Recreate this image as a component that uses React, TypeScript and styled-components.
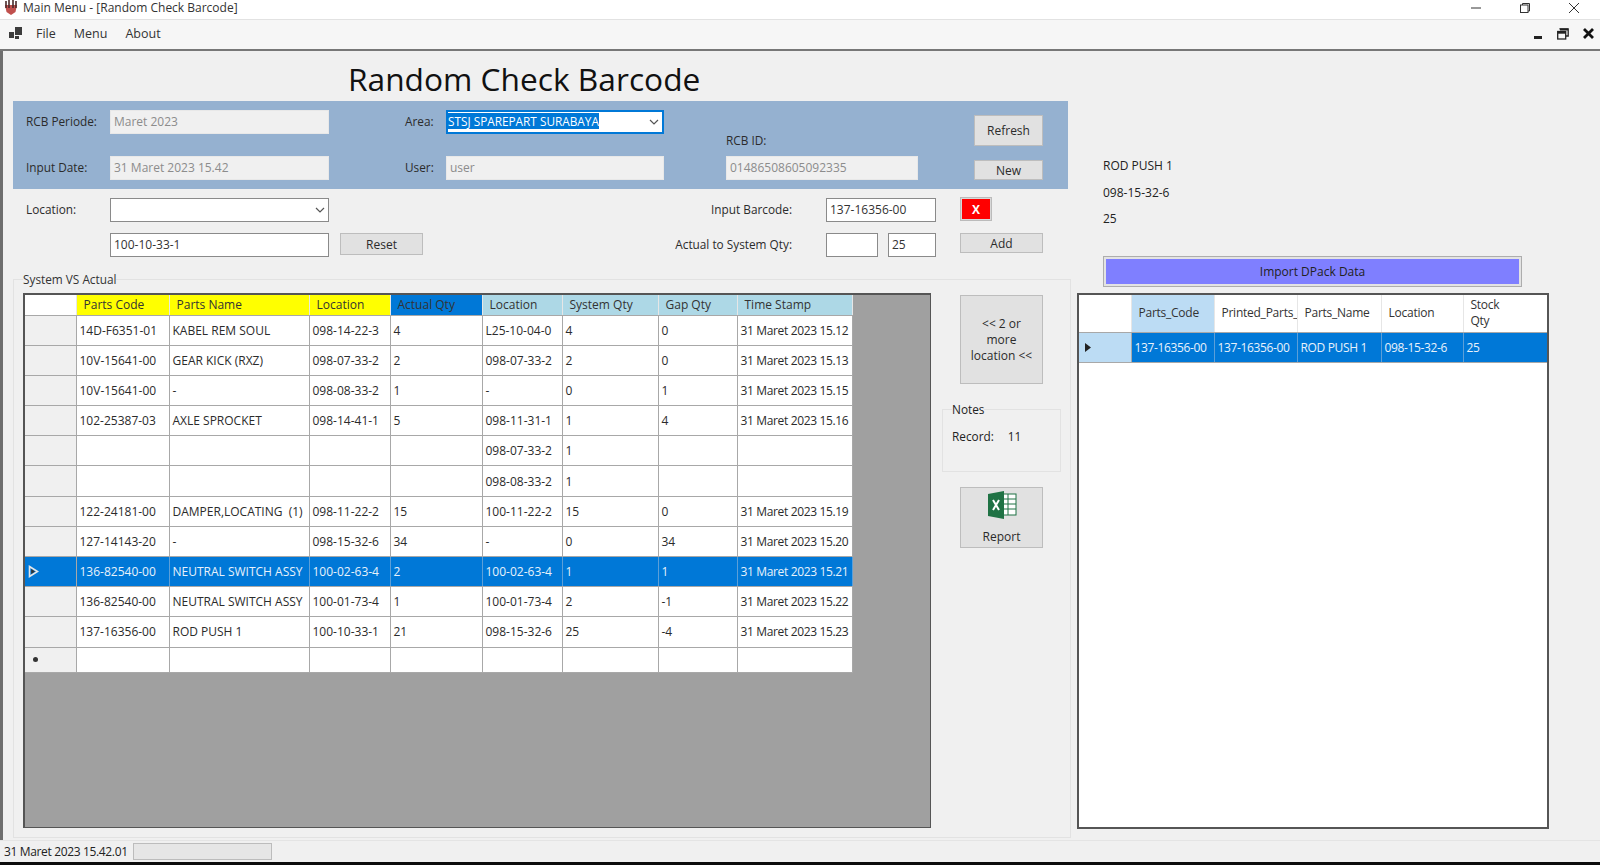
import React from 'react';
import styled, { createGlobalStyle } from 'styled-components';

const GlobalStyle = createGlobalStyle`
  html, body { margin: 0; padding: 0; background: #000; }
  * { box-sizing: border-box; }
  body { font-family: "Open Sans", "Noto Sans", "Liberation Sans", sans-serif; font-size: 12px; color: #222; }
`;

const Window = styled.div`
  width: 1600px;
  height: 865px;
  display: flex;
  flex-direction: column;
  background: #f0f0f0;
  overflow: hidden;
`;

const TitleBar = styled.div`
  height: 19px;
  flex: none;
  background: #fff;
  display: flex;
  align-items: center;
  padding: 0 0 4px 3px;
  gap: 4px;
  font-size: 12px;
  color: #333;
`;

const TitleText = styled.span`
  flex: 1;
`;

const TitleControls = styled.div`
  display: flex;
  align-items: center;
  gap: 39px;
  padding-right: 21px;
`;

const MenuBar = styled.div`
  height: 32px;
  flex: none;
  background: #f6f6f6;
  border-top: 1px solid #e2e2e2;
  border-bottom: 2px solid #777;
  display: flex;
  align-items: center;
  padding: 0 0 2px 9px;
  font-size: 12.5px;
  color: #333;
`;

const MenuItem = styled.span<{ $gap: number }>`
  margin-left: ${p => p.$gap}px;
`;

const MdiControls = styled.div`
  margin-left: auto;
  display: flex;
  align-items: center;
  gap: 14px;
  padding-right: 6px;
`;

const Content = styled.div`
  flex: 1;
  min-height: 0;
  display: flex;
  gap: 6px;
  border-left: 3px solid #6e6e6e;
  padding: 0 0 2px 10px;
`;

const LeftColumn = styled.div`
  width: 1058px;
  flex: none;
  display: flex;
  flex-direction: column;
`;

const Heading = styled.h1`
  margin: 0;
  height: 50px;
  padding-left: 335px;
  font-size: 31.7px;
  line-height: 56px;
  font-weight: 400;
  color: #111;
`;

const BluePanel = styled.div`
  width: 1055px;
  height: 88px;
  flex: none;
  background: #95b1d0;
  display: grid;
  grid-template-columns: 84px 219px 76px 41px 218px 62px 192px 56px 69px;
  grid-template-rows: 24px 24px;
  row-gap: 22px;
  padding: 9px 0 0 13px;
`;

const Label = styled.label<{ $right?: boolean; $col?: number; $row?: number }>`
  display: flex;
  align-items: center;
  font-size: 11.8px;
  padding-bottom: 2px;
  color: #2b2b2b;
  white-space: nowrap;
  justify-content: ${p => (p.$right ? 'flex-end' : 'flex-start')};
  grid-column: ${p => p.$col ?? 'auto'};
  grid-row: ${p => p.$row ?? 'auto'};
`;

const IdLabel = styled(Label)`
  align-items: flex-end;
  margin-bottom: -16px;
`;

const Field = styled.input<{ $muted?: boolean; $plain?: boolean; $col?: number; $row?: number }>`
  width: 100%;
  height: 24px;
  min-width: 0;
  padding: 0 3px 2px;
  font: inherit;
  font-size: 12px;
  outline: none;
  color: ${p => (p.$muted ? '#8c8c8c' : '#333')};
  background: ${p => (p.$muted ? '#f0f0f0' : '#fff')};
  border: ${p => (p.$plain ? '1px solid #e8e8e8' : '1px solid #8a8a8a')};
  grid-column: ${p => p.$col ?? 'auto'};
  grid-row: ${p => p.$row ?? 'auto'};
`;

const Combo = styled.div<{ $focused?: boolean; $col: number; $row: number }>`
  height: 24px;
  background: #fff;
  border: ${p => (p.$focused ? '2px solid #0078d7' : '1px solid #8a8a8a')};
  display: flex;
  align-items: center;
  justify-content: ${p => (p.$focused ? 'space-between' : 'flex-end')};
  padding: 0 3px 0 0;
  grid-column: ${p => p.$col};
  grid-row: ${p => p.$row};
`;

const Selected = styled.span`
  background: #0078d7;
  color: #fff;
  font-size: 11.8px;
  line-height: 16px;
  margin-bottom: 2px;
  white-space: nowrap;
`;

const Chevron = () => (
  <svg width="10" height="6" viewBox="0 0 10 6" fill="none" stroke="#555" strokeWidth="1.2">
    <path d="M1 1l4 4 4-4" />
  </svg>
);

const ButtonStack = styled.div`
  grid-column: 9;
  grid-row: 1 / span 2;
  display: flex;
  flex-direction: column;
  gap: 14px;
  padding-top: 5px;
`;

const Button = styled.button<{ $h: number; $col?: number; $row?: number }>`
  height: ${p => p.$h}px;
  width: 100%;
  flex: none;
  padding: 0;
  background: #e1e1e1;
  border: 1px solid #bdbdbd;
  font: inherit;
  font-size: 12px;
  color: #2b2b2b;
  grid-column: ${p => p.$col ?? 'auto'};
  grid-row: ${p => p.$row ?? 'auto'};
`;

const FormGrid = styled.div`
  margin-top: 9px;
  display: grid;
  grid-template-columns: 84px 219px 11px 83px 369px 34px 110px 24px 83px;
  grid-template-rows: 24px 24px;
  row-gap: 11px;
  padding-left: 13px;
  flex: none;
`;

const QtyPair = styled.div`
  grid-column: 7;
  grid-row: 2;
  display: flex;
  gap: 10px;
`;

const QtyField = styled(Field)<{ $w: number }>`
  width: ${p => p.$w}px;
`;

const CloseBtn = styled.button`
  grid-column: 9;
  grid-row: 1;
  width: 30px;
  height: 22px;
  margin-left: 1px;
  padding: 0;
  background: #ff0000;
  border: 1px solid #d8d8d8;
  box-shadow: 0 0 0 1px #bbb;
  color: #fff;
  font: inherit;
  font-size: 12px;
  font-weight: 700;
`;

const Group = styled.fieldset`
  margin: 14px 0 0;
  padding: 5px 9px 9px;
  flex: 1;
  min-height: 0;
  display: flex;
  border: 1px solid #e2e2e2;
  min-width: 0;
`;

const Legend = styled.legend`
  padding: 0;
  margin-left: 0;
  font-size: 11.8px;
  line-height: 17px;
  color: #333;
`;

const GridBox = styled.div<{ $w: number }>`
  width: ${p => p.$w}px;
  flex: none;
  background: #a0a0a0;
  border: 2px solid #555;
  border-right-width: 1px;
  border-bottom-width: 1px;
  overflow: hidden;
`;

const Table = styled.table<{ $w: number }>`
  width: ${p => p.$w}px;
  table-layout: fixed;
  border-collapse: collapse;
  font-size: 12px;
`;

const Head = styled.th<{ $bg: string; $h: number; $tight?: boolean }>`
  height: ${p => p.$h}px;
  background: ${p => p.$bg};
  border-right: 1px solid #e6e6e6;
  border-bottom: 1px solid #a8a8a8;
  padding: 0 0 0 7px;
  font-weight: 400;
  text-align: left;
  color: #333;
  line-height: 16px;
  white-space: pre-line;
  overflow: hidden;
  letter-spacing: ${p => (p.$tight ? '-0.25px' : '0')};
`;

const Cell = styled.td<{ $sel?: boolean; $h: number; $tight?: boolean }>`
  height: ${p => p.$h}px;
  background: ${p => (p.$sel ? '#0078d7' : '#fff')};
  color: ${p => (p.$sel ? '#e8f2fb' : '#2b2b2b')};
  border-right: 1px solid ${p => (p.$sel ? '#5c9fd8' : '#a8a8a8')};
  border-bottom: 1px solid #a8a8a8;
  padding: 0 0 0 3px;
  white-space: pre;
  overflow: hidden;
  letter-spacing: ${p => (p.$tight ? '-0.35px' : '0')};
`;

const RowHeader = styled.td<{ $bg: string; $h: number }>`
  height: ${p => p.$h}px;
  background: ${p => p.$bg};
  border-right: 1px solid #a8a8a8;
  border-bottom: 1px solid #a8a8a8;
  padding: 0 0 0 3px;
`;

const SideColumn = styled.div`
  width: 119px;
  margin-left: 11px;
  flex: none;
  display: flex;
  flex-direction: column;
`;

const SideButton = styled(Button)`
  margin: 2px 0 0 18px;
  width: 83px;
  line-height: 16px;
  display: flex;
  flex-direction: column;
  align-items: center;
  justify-content: center;
`;

const ReportButton = styled(SideButton)`
  margin-top: 15px;
  gap: 9px;
`;

const Notes = styled.fieldset`
  margin: 17px 0 0;
  padding: 0 0 0 9px;
  height: 71px;
  flex: none;
  border: 1px solid #e2e2e2;
  min-width: 0;
`;

const NotesLegend = styled.legend`
  padding: 0;
  margin-left: 0;
  font-size: 11.8px;
  line-height: 17px;
`;

const RecordLine = styled.div`
  display: flex;
  gap: 14px;
  margin-top: 10px;
  font-size: 11.8px;
`;

const RightColumn = styled.div`
  width: 472px;
  flex: none;
  display: flex;
  flex-direction: column;
`;

const Info = styled.div`
  margin: 102px 0 0 26px;
  line-height: 26.5px;
  font-size: 12px;
  height: 79px;
`;

const ImportButton = styled.button`
  margin: 24px 0 0 26px;
  width: 419px;
  height: 31px;
  flex: none;
  padding: 0;
  background: #7f7fff;
  border: 1px solid #adadad;
  box-shadow: inset 0 0 0 2px #e3e3e3;
  font: inherit;
  font-size: 12px;
  color: #222;
`;

const RightGrid = styled(GridBox)`
  margin-top: 6px;
  height: 536px;
  background: #fff;
  border-right-width: 2px;
  border-bottom-width: 2px;
`;

const StatusBar = styled.div`
  height: 22px;
  flex: none;
  background: #f0f0f0;
  border-top: 1px solid #e4e4e4;
  display: flex;
  align-items: center;
  gap: 5px;
  padding-left: 4px;
  font-size: 12px;
  letter-spacing: -0.35px;
`;

const Progress = styled.div`
  width: 139px;
  height: 17px;
  background: #e6e6e6;
  border: 1px solid #bcbcbc;
`;

const BottomEdge = styled.div`
  height: 3px;
  flex: none;
  background: #0c0c0c;
`;

const AppIcon = () => (
  <svg width="16" height="15" viewBox="0 0 16 15">
    <path d="M2 5h12l-1.5 7L8 15l-4.5-3z" fill="#c0504d" />
    <path d="M3 1v7M6 0v8M10 0v8M13 1v7" stroke="#4a2a2a" strokeWidth="1.6" />
  </svg>
);

const MdiIcon = () => (
  <svg width="14" height="13" viewBox="0 0 14 13" fill="#3c3c3c">
    <rect x="0" y="5" width="5" height="6" />
    <rect x="6" y="0" width="7" height="8" />
    <rect x="6" y="9" width="4" height="3" />
  </svg>
);

const WinMin = () => (
  <svg width="10" height="10" viewBox="0 0 10 10" stroke="#333" fill="none"><path d="M0 5h10" /></svg>
);
const WinRestore = () => (
  <svg width="10" height="10" viewBox="0 0 10 10" stroke="#333" fill="none">
    <rect x="0.5" y="2" width="7.5" height="7.5" />
    <path d="M2.5 2V.5h7V8H8" />
  </svg>
);
const WinClose = () => (
  <svg width="10" height="10" viewBox="0 0 10 10" stroke="#333" fill="none"><path d="M0 0l10 10M10 0L0 10" /></svg>
);

const MdiMin = () => (
  <svg width="9" height="12" viewBox="0 0 9 12" fill="#222"><rect x="0" y="8" width="8" height="3" /></svg>
);
const MdiRestore = () => (
  <svg width="12" height="12" viewBox="0 0 12 12" fill="none" stroke="#222" strokeWidth="1.3">
    <rect x="0.7" y="3.5" width="8" height="7.5" />
    <path d="M0.7 4.5h8" strokeWidth="2.4" />
    <path d="M3 1.5V.8h8.2V8H9" />
    <path d="M3 1.5h8" strokeWidth="2" />
  </svg>
);
const MdiClose = () => (
  <svg width="11" height="11" viewBox="0 0 11 11" stroke="#111" strokeWidth="2.8" fill="none"><path d="M1 1l9 9M10 1l-9 9" /></svg>
);

const ExcelIcon = () => (
  <svg width="30" height="30" viewBox="0 0 30 30">
    <rect x="14" y="4" width="15" height="21" fill="#fff" stroke="#1f7244" />
    <path d="M14 9h15M14 14h15M14 19h15M21 4v21" stroke="#1f7244" />
    <path d="M1 4l16-3v28L1 26z" fill="#1f7244" />
    <path d="M6 10l6 10M12 10l-6 10" stroke="#fff" strokeWidth="2" />
  </svg>
);

const MarkerSvg = styled.svg<{ $left: number }>`
  display: block;
  margin-left: ${p => p.$left}px;
`;

const SelectedMarker = () => (
  <MarkerSvg $left={0} width="11" height="13" viewBox="0 0 11 13">
    <path d="M1.5 1.5l8 5-8 5z" fill="#0078d7" stroke="#e6e6e6" strokeWidth="1.6" />
    <path d="M3.2 4l3.8 2.5-3.8 2.5z" fill="#333" />
  </MarkerSvg>
);

const CurrentMarker = () => (
  <MarkerSvg $left={3} width="7" height="9" viewBox="0 0 7 9">
    <path d="M0 0l6 4.5L0 9z" fill="#222" />
  </MarkerSvg>
);

const NewRowMarker = () => (
  <MarkerSvg $left={3} width="9" height="9" viewBox="0 0 9 9">
    <circle cx="4.5" cy="4.5" r="2.5" fill="#333" />
  </MarkerSvg>
);

const YELLOW = '#ffff00';
const BLUE = '#0078d7';
const LIGHT = '#add8e6';

const mainHead = [
  { t: 'Parts Code', bg: YELLOW },
  { t: 'Parts Name', bg: YELLOW },
  { t: 'Location', bg: YELLOW },
  { t: 'Actual Qty', bg: BLUE },
  { t: 'Location', bg: LIGHT },
  { t: 'System Qty', bg: LIGHT },
  { t: 'Gap Qty', bg: LIGHT },
  { t: 'Time Stamp', bg: LIGHT },
];

const mainWidths = [51, 93, 140, 81, 92, 80, 96, 79, 115];

const rows = [
  ['14D-F6351-01', 'KABEL REM SOUL', '098-14-22-3', '4', 'L25-10-04-0', '4', '0', '31 Maret 2023 15.12'],
  ['10V-15641-00', 'GEAR KICK (RXZ)', '098-07-33-2', '2', '098-07-33-2', '2', '0', '31 Maret 2023 15.13'],
  ['10V-15641-00', '-', '098-08-33-2', '1', '-', '0', '1', '31 Maret 2023 15.15'],
  ['102-25387-03', 'AXLE SPROCKET', '098-14-41-1', '5', '098-11-31-1', '1', '4', '31 Maret 2023 15.16'],
  ['', '', '', '', '098-07-33-2', '1', '', ''],
  ['', '', '', '', '098-08-33-2', '1', '', ''],
  ['122-24181-00', 'DAMPER,LOCATING  (1)', '098-11-22-2', '15', '100-11-22-2', '15', '0', '31 Maret 2023 15.19'],
  ['127-14143-20', '-', '098-15-32-6', '34', '-', '0', '34', '31 Maret 2023 15.20'],
  ['136-82540-00', 'NEUTRAL SWITCH ASSY', '100-02-63-4', '2', '100-02-63-4', '1', '1', '31 Maret 2023 15.21'],
  ['136-82540-00', 'NEUTRAL SWITCH ASSY', '100-01-73-4', '1', '100-01-73-4', '2', '-1', '31 Maret 2023 15.22'],
  ['137-16356-00', 'ROD PUSH 1', '100-10-33-1', '21', '098-15-32-6', '25', '-4', '31 Maret 2023 15.23'],
];

const SELECTED_ROW = 8;

const dpackHead = ['Parts_Code', 'Printed_Parts_', 'Parts_Name', 'Location', 'Stock\nQty'];
const dpackRow = ['137-16356-00', '137-16356-00', 'ROD PUSH 1', '098-15-32-6', '25'];
const dpackWidths = [52, 83, 83, 84, 82, 85];

const Colgroup = ({ widths }: { widths: number[] }) => (
  <colgroup>
    {widths.map((w, i) => (
      <col key={i} width={w} />
    ))}
  </colgroup>
);

const App: React.FC = () => {
  return (
    <Window>
      <GlobalStyle />
      <TitleBar>
        <AppIcon />
        <TitleText>Main Menu - [Random Check Barcode]</TitleText>
        <TitleControls>
          <WinMin />
          <WinRestore />
          <WinClose />
        </TitleControls>
      </TitleBar>
      <MenuBar>
        <MdiIcon />
        <MenuItem $gap={13}>File</MenuItem>
        <MenuItem $gap={18}>Menu</MenuItem>
        <MenuItem $gap={18}>About</MenuItem>
        <MdiControls>
          <MdiMin />
          <MdiRestore />
          <MdiClose />
        </MdiControls>
      </MenuBar>
      <Content>
        <LeftColumn>
          <Heading>Random Check Barcode</Heading>
          <BluePanel>
            <Label>RCB Periode:</Label>
            <Field $muted $plain readOnly value="Maret 2023" />
            <Label $col={4} $row={1}>Area:</Label>
            <Combo $focused $col={5} $row={1}>
              <Selected>STSJ SPAREPART SURABAYA</Selected>
              <Chevron />
            </Combo>
            <IdLabel $col={7} $row={1}>RCB ID:</IdLabel>
            <ButtonStack>
              <Button $h={31}>Refresh</Button>
              <Button $h={20}>New</Button>
            </ButtonStack>
            <Label $col={1} $row={2}>Input Date:</Label>
            <Field $col={2} $row={2} $muted $plain readOnly value="31 Maret 2023 15.42" />
            <Label $col={4} $row={2}>User:</Label>
            <Field $col={5} $row={2} $muted $plain readOnly value="user" />
            <Field $col={7} $row={2} $muted $plain readOnly value="01486508605092335" />
          </BluePanel>
          <FormGrid>
            <Label>Location:</Label>
            <Combo $col={2} $row={1}>
              <Chevron />
            </Combo>
            <Label $col={5} $row={1} $right>Input Barcode:</Label>
            <Field $col={7} $row={1} readOnly value="137-16356-00" />
            <CloseBtn>X</CloseBtn>
            <Field $col={2} $row={2} readOnly value="100-10-33-1" />
            <Button $col={4} $row={2} $h={22}>Reset</Button>
            <Label $col={5} $row={2} $right>Actual to System Qty:</Label>
            <QtyPair>
              <QtyField $w={52} readOnly value="" />
              <QtyField $w={48} readOnly value="25" />
            </QtyPair>
            <Button $col={9} $row={2} $h={20}>Add</Button>
          </FormGrid>
          <Group>
            <Legend>System VS Actual</Legend>
            <GridBox $w={908}>
              <Table $w={827}>
                <Colgroup widths={mainWidths} />
                <thead>
                  <tr>
                    <Head $bg="#fff" $h={20} />
                    {mainHead.map((h, i) => (
                      <Head key={i} $bg={h.bg} $h={20}>{h.t}</Head>
                    ))}
                  </tr>
                </thead>
                <tbody>
                  {rows.map((r, i) => (
                    <tr key={i}>
                      <RowHeader $bg={i === SELECTED_ROW ? BLUE : '#f0f0f0'} $h={30.2}>
                        {i === SELECTED_ROW && <SelectedMarker />}
                      </RowHeader>
                      {r.map((c, j) => (
                        <Cell key={j} $sel={i === SELECTED_ROW} $h={30.2} $tight={j === 7}>{c}</Cell>
                      ))}
                    </tr>
                  ))}
                  <tr>
                    <RowHeader $bg="#f0f0f0" $h={25}>
                      <NewRowMarker />
                    </RowHeader>
                    {mainHead.map((_, j) => (
                      <Cell key={j} $h={25} />
                    ))}
                  </tr>
                </tbody>
              </Table>
            </GridBox>
            <SideColumn>
              <SideButton $h={89}>
                <span>&lt;&lt; 2 or</span>
                <span>more</span>
                <span>location &lt;&lt;</span>
              </SideButton>
              <Notes>
                <NotesLegend>Notes</NotesLegend>
                <RecordLine>
                  <span>Record:</span>
                  <span>11</span>
                </RecordLine>
              </Notes>
              <ReportButton $h={61}>
                <ExcelIcon />
                <span>Report</span>
              </ReportButton>
            </SideColumn>
          </Group>
        </LeftColumn>
        <RightColumn>
          <Info>
            <div>ROD PUSH 1</div>
            <div>098-15-32-6</div>
            <div>25</div>
          </Info>
          <ImportButton>Import DPack Data</ImportButton>
          <RightGrid $w={472}>
            <Table $w={469}>
              <Colgroup widths={dpackWidths} />
              <thead>
                <tr>
                  <Head $bg="#fff" $h={37} />
                  {dpackHead.map((h, i) => (
                    <Head key={i} $bg={i === 0 ? '#bcdcf4' : '#fff'} $h={37} $tight>{h}</Head>
                  ))}
                </tr>
              </thead>
              <tbody>
                <tr>
                  <RowHeader $bg="#bcdcf4" $h={30}>
                    <CurrentMarker />
                  </RowHeader>
                  {dpackRow.map((c, j) => (
                    <Cell key={j} $sel $h={30} $tight>{c}</Cell>
                  ))}
                </tr>
              </tbody>
            </Table>
          </RightGrid>
        </RightColumn>
      </Content>
      <StatusBar>
        <span>31 Maret 2023 15.42.01</span>
        <Progress />
      </StatusBar>
      <BottomEdge />
    </Window>
  );
};

export default App;
